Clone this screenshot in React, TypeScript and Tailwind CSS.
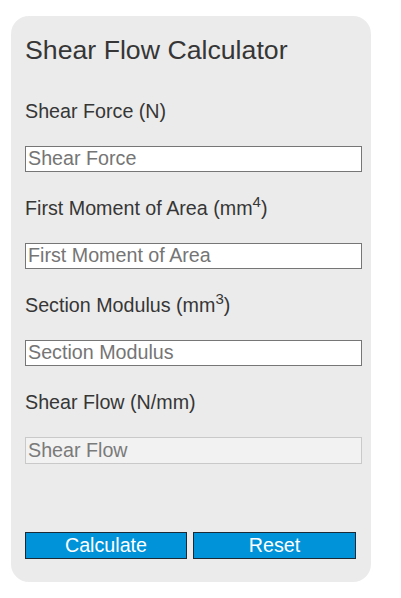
import React from "react";

const fields = [
  { label: <>Shear Force (N)</>, ph: "Shear Force" },
  { label: <>First Moment of Area (mm<sup className="text-[15px] top-[-0.55em]">4</sup>)</>, ph: "First Moment of Area" },
  { label: <>Section Modulus (mm<sup className="text-[15px] top-[-0.55em]">3</sup>)</>, ph: "Section Modulus" },
];

export default function App() {
  return (
    <div className="bg-white w-[401px] h-[598px] pt-[16px] pl-[11px]" style={{ fontFamily: '"Liberation Sans", Arial, sans-serif' }}>
      <div className="w-[360px] h-[566px] bg-[#ebebeb] rounded-[18px] pt-[19px] pl-[14px] pr-[9px] text-[#363636]">
        <h1 className="text-[26.7px] leading-[31px] font-normal">Shear Flow Calculator</h1>
        <div className="mt-[34px]">
          {fields.map((f, i) => (
            <div key={i} className="mb-[25px]">
              <div className="text-[19.7px] leading-[23px]">{f.label}</div>
              <input
                type="text"
                placeholder={f.ph}
                className="mt-[23px] block w-[337px] h-[26px] bg-white border border-[#767676] px-[2px] text-[19.7px] text-[#333] placeholder:text-[#757575] outline-none"
              />
            </div>
          ))}
          <div>
            <div className="text-[19.7px] leading-[23px]">Shear Flow (N/mm)</div>
            <input
              type="text"
              disabled
              placeholder="Shear Flow"
              className="mt-[23px] block w-[337px] h-[27px] bg-[#f2f2f2] border border-[#c9c9c9] px-[2px] text-[19.7px] placeholder:text-[#7a7a7a] outline-none"
            />
          </div>
          <div className="mt-[68px] flex gap-[6px]">
            <button className="w-[162px] h-[27px] bg-[#0093d9] border border-[#1b2a35] text-white text-[19.7px] leading-none">Calculate</button>
            <button className="w-[163px] h-[27px] bg-[#0093d9] border border-[#1b2a35] text-white text-[19.7px] leading-none">Reset</button>
          </div>
        </div>
      </div>
    </div>
  );
}
